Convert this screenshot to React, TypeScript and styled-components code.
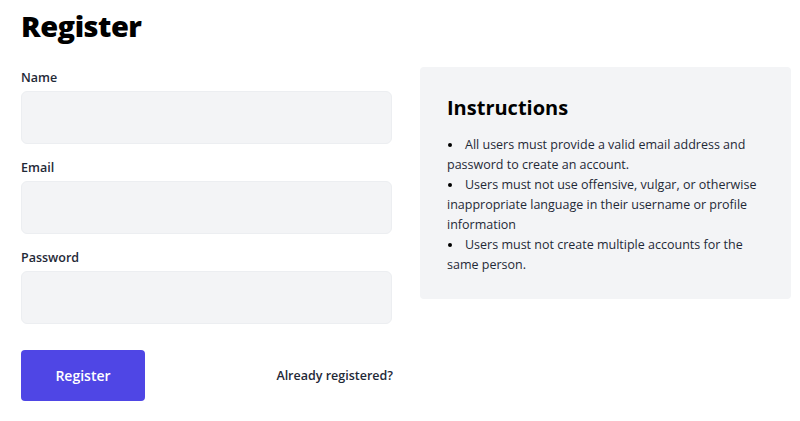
import React from "react";
import styled, { createGlobalStyle } from "styled-components";

const Global = createGlobalStyle`
  html, body { margin: 0; padding: 0; background: #ffffff; }
  body { font-family: "Open Sans", "Noto Sans", "Liberation Sans", sans-serif; color: #111827; }
  * { box-sizing: border-box; }
`;

const Page = styled.div`
  padding: 8px 9px 0 21px;
`;

const Title = styled.h1`
  margin: 0 0 23px 0;
  font-size: 29px;
  line-height: 36px;
  font-weight: 800;
  color: #000;
  letter-spacing: -0.5px;
`;

const Columns = styled.div`
  display: grid;
  grid-template-columns: 371px 371px;
  column-gap: 28px;
  align-items: start;
`;

const Form = styled.form`
  display: flex;
  flex-direction: column;
  padding-top: 4px;
`;

const Field = styled.div`
  display: flex;
  flex-direction: column;
  gap: 6px;
  margin-bottom: 17px;
`;

const Label = styled.label`
  font-size: 12.5px;
  line-height: 14px;
  font-weight: 600;
  color: #1f2937;
`;

const Input = styled.input`
  height: 53px;
  width: 100%;
  border: 1px solid #eceef1;
  background: #f3f4f6;
  border-radius: 6px;
  outline: none;
  font: inherit;
  padding: 0 12px;
`;

const Actions = styled.div`
  display: flex;
  align-items: center;
  justify-content: space-between;
  margin-top: 9px;
`;

const Button = styled.button`
  width: 124px;
  height: 51px;
  border: none;
  border-radius: 4px;
  background: #4f46e5;
  color: #ffffff;
  font-family: inherit;
  font-size: 14px;
  font-weight: 600;
`;

const Link = styled.a`
  font-size: 12.5px;
  font-weight: 600;
  color: #1f2937;
  text-decoration: none;
  margin-right: -1px;
`;

const Panel = styled.aside`
  background: #f3f4f6;
  border-radius: 4px;
  padding: 28px 27px 24px 27px;
  min-height: 232px;
`;

const PanelTitle = styled.h2`
  margin: 0 0 14px 0;
  font-size: 20px;
  line-height: 26px;
  font-weight: 700;
  color: #000;
`;

const Rules = styled.ul`
  list-style: none;
  margin: 0;
  padding: 0;
  font-size: 12.5px;
  line-height: 20px;
  color: #1f2937;
`;

const Rule = styled.li`
  &::before {
    content: "";
    display: inline-block;
    width: 4px;
    height: 4px;
    border-radius: 50%;
    background: #000;
    margin: 0 13px 2px 1px;
    vertical-align: middle;
  }
`;

export default function App() {
  return (
    <Page>
      <Global />
      <Title>Register</Title>
      <Columns>
        <Form onSubmit={(e) => e.preventDefault()}>
          <Field>
            <Label htmlFor="name">Name</Label>
            <Input id="name" type="text" />
          </Field>
          <Field>
            <Label htmlFor="email">Email</Label>
            <Input id="email" type="email" />
          </Field>
          <Field>
            <Label htmlFor="password">Password</Label>
            <Input id="password" type="password" />
          </Field>
          <Actions>
            <Button type="submit">Register</Button>
            <Link href="#">Already registered?</Link>
          </Actions>
        </Form>
        <Panel>
          <PanelTitle>Instructions</PanelTitle>
          <Rules>
            <Rule>All users must provide a valid email address and password to create an account.</Rule>
            <Rule>Users must not use offensive, vulgar, or otherwise inappropriate language in their username or profile information</Rule>
            <Rule>Users must not create multiple accounts for the same person.</Rule>
          </Rules>
        </Panel>
      </Columns>
    </Page>
  );
}
